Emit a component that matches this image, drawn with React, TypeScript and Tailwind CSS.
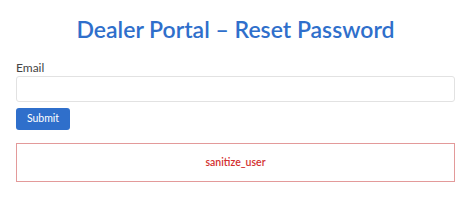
export default function App() {
  return (
    <div className="min-h-[201px] bg-white pl-4 pr-[19px] pt-[14px]" style={{ fontFamily: "Lato, 'Open Sans', sans-serif" }}>
      <h1 className="text-center text-[23px] font-semibold leading-[30px] text-[#2f6fcb]">Dealer Portal – Reset Password</h1>
      <div className="mt-[16px]">
        <label className="block text-[12px] leading-[15px] text-[#444]">Email</label>
        <input className="mt-[1px] block h-[26px] w-full rounded-[3px] border border-[#e2e2e2] bg-white" />
        <button className="mt-[6px] block h-[22px] w-[54px] rounded-[3px] bg-[#2f6fcb] text-[10.5px] text-white">Submit</button>
      </div>
      <div className="mt-[13px] flex h-[39px] items-center justify-center border border-[#e39a9a] text-[10.5px] font-semibold text-[#d32f2f]">sanitize_user</div>
    </div>
  );
}
